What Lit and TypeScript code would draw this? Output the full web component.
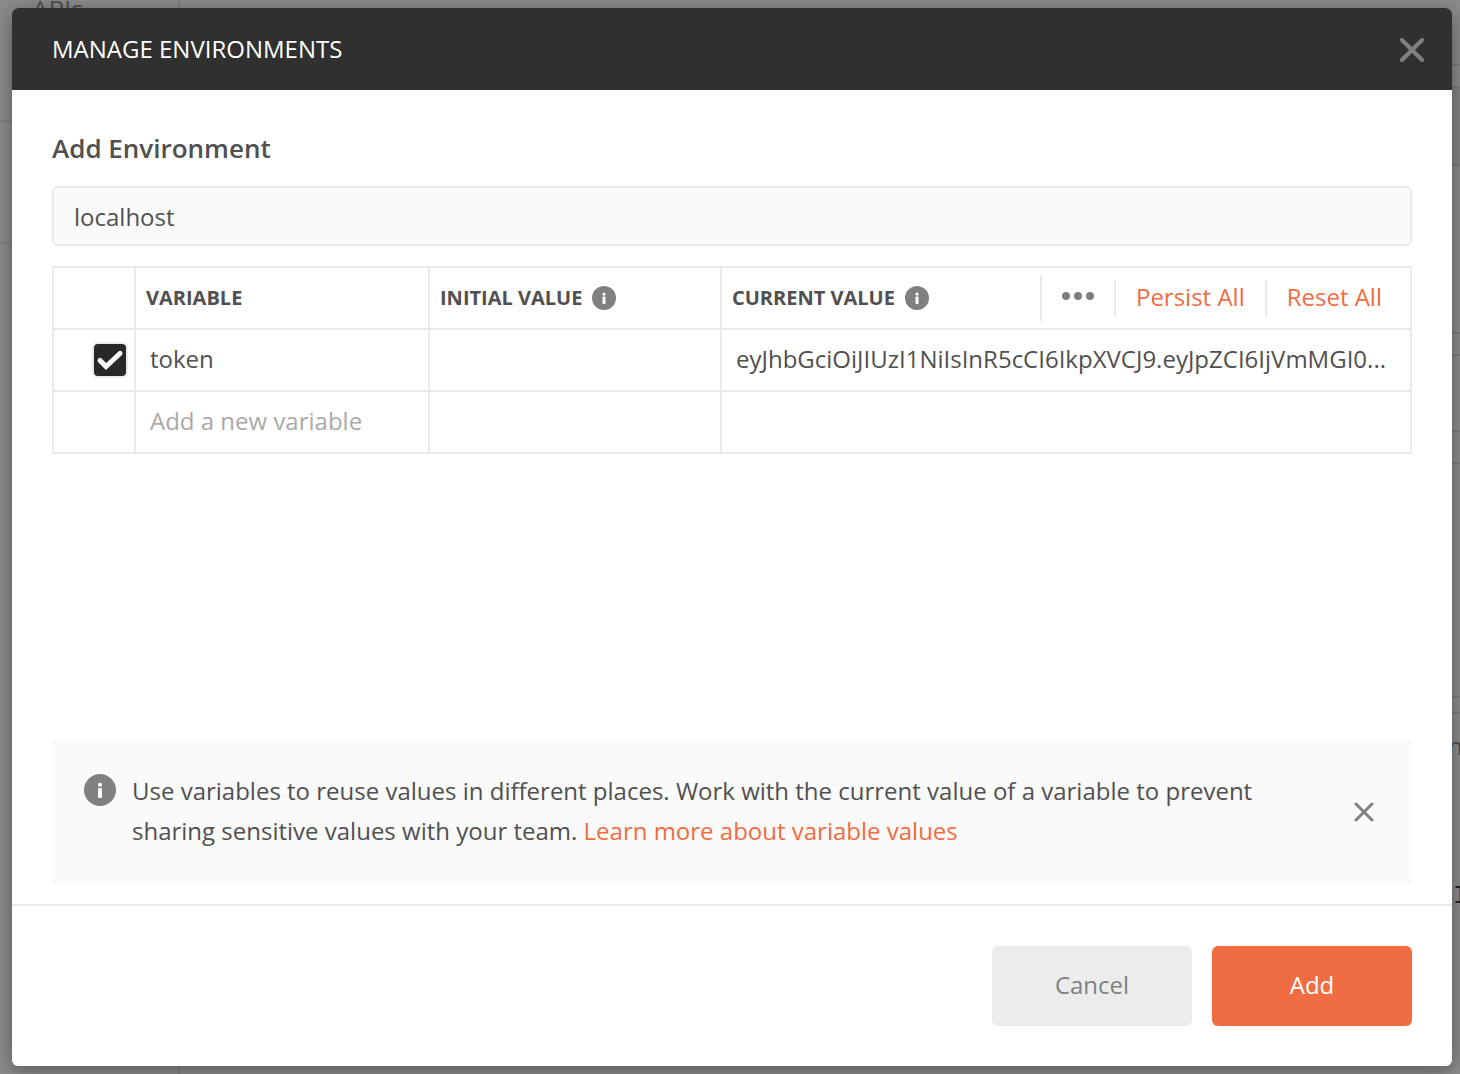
import { LitElement, html, css, svg } from "lit";
import { customElement, property } from "lit/decorators.js";

@customElement("info-icon")
class InfoIcon extends LitElement {
  static styles = css`
    :host {
      display: block;
      flex: none;
      width: 24px;
      height: 24px;
    }
    :host([large]) {
      width: 32px;
      height: 32px;
    }
    svg {
      display: block;
      width: 100%;
      height: 100%;
    }
  `;

  render() {
    return html`<svg viewBox="0 0 32 32" aria-hidden="true">
      <circle cx="16" cy="16" r="16" fill="#808080" />
      <circle cx="16" cy="10.8" r="2.1" fill="#fafafa" />
      <rect x="14" y="14" width="4" height="10" rx="1" fill="#fafafa" />
    </svg>`;
  }
}

@customElement("close-icon")
class CloseIcon extends LitElement {
  @property({ type: Number }) size = 20;

  static styles = css`
    :host,
    svg {
      display: block;
    }
  `;

  render() {
    const end = this.size - 2;
    return html`<svg width=${this.size} height=${this.size} aria-hidden="true">
      ${svg`<path d=${`M2 2L${end} ${end}M${end} 2L2 ${end}`} fill="none" stroke="#808080"
        stroke-width=${this.size > 20 ? 4 : 3} stroke-linecap="round" />`}
    </svg>`;
  }
}

@customElement("app-root")
class AppRoot extends LitElement {
  static styles = css`
    :host {
      display: grid;
      min-height: 100vh;
      overflow: hidden;
      background: #8c8c8c;
      color: #505050;
      font-family: "Open Sans", "Noto Sans", sans-serif;
      font-size: 24px;
      line-height: 32px;
    }
    * {
      box-sizing: border-box;
    }
    button,
    input {
      margin: 0;
      padding: 0;
      border: 0;
      background: none;
      color: inherit;
      font: inherit;
    }
    button {
      cursor: pointer;
    }
    .backdrop,
    .dialog {
      grid-area: 1 / 1;
      min-width: 0;
    }
    .backdrop {
      display: flex;
      justify-content: space-between;
    }
    .side {
      width: 180px;
      border-right: 2px solid #808080;
    }
    .side-tab,
    .side-row {
      border-bottom: 2px solid #808080;
    }
    .side-tab {
      height: 122px;
      padding-left: 32px;
      font-size: 26px;
      line-height: 18px;
    }
    .side-row {
      height: 122px;
    }
    .main {
      width: 12px;
    }
    .band {
      border-bottom: 2px solid #7c7c7c;
    }
    .b66 {
      height: 66px;
    }
    .b22 {
      height: 22px;
    }
    .b78 {
      height: 78px;
      background: #858585;
    }
    .b168 {
      height: 168px;
    }
    .b76 {
      height: 76px;
    }
    .b32 {
      height: 32px;
    }
    .b234 {
      height: 234px;
    }
    .b16 {
      height: 16px;
    }
    .cut {
      height: 148px;
      padding-top: 16px;
    }
    .mono {
      padding-left: 5px;
      padding-top: 18px;
      color: #222222;
      font-family: "Liberation Mono", monospace;
      font-size: 26px;
    }
    .dialog {
      display: flex;
      flex-direction: column;
      margin: 8px 8px 8px 12px;
      border-radius: 6px;
      background: #ffffff;
      box-shadow: 0 4px 20px rgba(0, 0, 0, 0.4);
    }
    .header {
      display: flex;
      align-items: center;
      justify-content: space-between;
      height: 82px;
      padding: 0 28px 0 40px;
      border-radius: 6px 6px 0 0;
      background: #303030;
    }
    .header-close {
      padding-top: 2px;
    }
    .title {
      margin: 0;
      color: #ffffff;
      font-size: 24px;
      font-weight: 400;
    }
    .body {
      display: flex;
      flex: 1;
      flex-direction: column;
      padding: 40px 40px 20px;
    }
    .heading {
      margin: 0 0 20px;
      font-size: 26px;
      font-weight: 600;
      line-height: 36px;
    }
    .name {
      width: 100%;
      height: 60px;
      margin-bottom: 20px;
      padding: 0 20px;
      border: 2px solid #eaeaea;
      border-radius: 6px;
      background: #fafafa;
    }
    .vars {
      width: 100%;
      table-layout: fixed;
      border-collapse: collapse;
    }
    .vars th,
    .vars td {
      height: 62px;
      padding: 0;
      border: 2px solid #eaeaea;
    }
    .col-check {
      width: 82px;
    }
    .col-variable {
      width: 294px;
    }
    .col-initial {
      width: 292px;
    }
    .head {
      display: flex;
      align-items: center;
      gap: 10px;
      padding-left: 10px;
      font-size: 20px;
      font-weight: 700;
    }
    .actions {
      display: flex;
      align-items: center;
      margin-left: auto;
      padding-right: 8px;
      font-size: 24px;
      font-weight: 400;
    }
    .more {
      display: flex;
      align-items: center;
      height: 46px;
      padding: 0 20px 4px;
      border-left: 2px solid #eaeaea;
    }
    .action {
      height: 36px;
      padding: 0 20px 2px;
      border-left: 2px solid #eaeaea;
      color: #f06c42;
      line-height: 34px;
    }
    .check {
      display: flex;
      justify-content: flex-end;
      padding-right: 6px;
    }
    .check-box {
      display: grid;
    }
    .check-box > * {
      grid-area: 1 / 1;
    }
    .tick {
      width: 36px;
      height: 36px;
      border: 2px solid #eaeaea;
      border-radius: 6px;
      appearance: none;
    }
    .tick:checked {
      background: #282828;
    }
    .tick-mark {
      pointer-events: none;
    }
    .cell {
      display: block;
      width: 100%;
      height: 60px;
      padding: 0 14px 4px;
      text-overflow: ellipsis;
    }
    .cell::placeholder {
      color: #a9a9a9;
      opacity: 1;
    }
    .note {
      display: flex;
      align-items: center;
      margin-top: auto;
      padding: 31px 38px 33px 32px;
      background: #fafafa;
    }
    .note info-icon {
      align-self: flex-start;
      margin: 3px 16px 0 0;
    }
    .note-text {
      flex: 1;
      max-width: 1160px;
      margin: 0;
      line-height: 40px;
    }
    .note-close {
      margin-left: auto;
      padding-top: 2px;
    }
    .link {
      color: #f06c42;
      text-decoration: none;
    }
    .footer {
      display: flex;
      justify-content: flex-end;
      gap: 20px;
      padding: 40px;
      border-top: 2px solid #eaeaea;
    }
    .button {
      width: 200px;
      height: 80px;
      padding-bottom: 2px;
      border-radius: 6px;
      background: #ececec;
      color: #808080;
    }
    .primary {
      background: #f06c42;
      color: #ffffff;
    }
  `;

  render() {
    return html`
      <div class="backdrop" aria-hidden="true">
        <div class="side">
          <div class="side-tab">APIs</div>
          <div class="side-row"></div>
        </div>
        <div class="main">
          <div class="band b66"></div>
          <div class="band b22"></div>
          <div class="band b78"></div>
          <div class="band b168"></div>
          <div class="band b22"></div>
          <div class="band b76"></div>
          <div class="band b32"></div>
          <div class="band b234"></div>
          <div class="band b16"></div>
          <div class="cut">n</div>
          <div class="cut mono">I</div>
        </div>
      </div>
      <section class="dialog" role="dialog" aria-labelledby="title">
        <header class="header">
          <h1 class="title" id="title">MANAGE ENVIRONMENTS</h1>
          <button class="header-close" aria-label="Close"><close-icon .size=${24}></close-icon></button>
        </header>
        <div class="body">
          <h2 class="heading"><label for="name">Add Environment</label></h2>
          <input class="name" id="name" type="text" value="localhost" />
          <table class="vars">
            <colgroup>
              <col class="col-check" />
              <col class="col-variable" />
              <col class="col-initial" />
              <col />
            </colgroup>
            <thead>
              <tr>
                <td></td>
                <th><div class="head">VARIABLE</div></th>
                <th><div class="head">INITIAL VALUE <info-icon></info-icon></div></th>
                <th>
                  <div class="head">
                    CURRENT VALUE <info-icon></info-icon>
                    <div class="actions">
                      <button class="more" aria-label="More">
                        <svg width="32" height="8" fill="#808080" aria-hidden="true">
                          <circle cx="4" cy="4" r="4" />
                          <circle cx="16" cy="4" r="4" />
                          <circle cx="28" cy="4" r="4" />
                        </svg>
                      </button>
                      <button class="action">Persist All</button>
                      <button class="action">Reset All</button>
                    </div>
                  </div>
                </th>
              </tr>
            </thead>
            <tbody>
              <tr>
                <td>
                  <div class="check">
                    <div class="check-box">
                      <input class="tick" type="checkbox" aria-label="Enable token" checked />
                      <svg class="tick-mark" width="36" height="36" aria-hidden="true">
                        <path d="M8 18.5L14 24.5L28 11.5" fill="none" stroke="#ffffff" stroke-width="5"
                          stroke-linecap="round" />
                      </svg>
                    </div>
                  </div>
                </td>
                <td><input class="cell" aria-label="Variable" value="token" /></td>
                <td><input class="cell" aria-label="Initial value" /></td>
                <td>
                  <input class="cell" aria-label="Current value"
                    value="eyJhbGciOiJIUzI1NiIsInR5cCI6IkpXVCJ9.eyJpZCI6IjVmMGI0..." />
                </td>
              </tr>
              <tr>
                <td></td>
                <td><input class="cell" aria-label="New variable" placeholder="Add a new variable" /></td>
                <td><input class="cell" aria-label="New initial value" /></td>
                <td><input class="cell" aria-label="New current value" /></td>
              </tr>
            </tbody>
          </table>
          <div class="note">
            <info-icon large></info-icon>
            <p class="note-text">
              Use variables to reuse values in different places. Work with the current value of a variable to
              prevent sharing sensitive values with your team.
              <a class="link" href="#">Learn more about variable values</a>
            </p>
            <button class="note-close" aria-label="Dismiss"><close-icon></close-icon></button>
          </div>
        </div>
        <footer class="footer">
          <button class="button">Cancel</button>
          <button class="button primary">Add</button>
        </footer>
      </section>
    `;
  }
}
